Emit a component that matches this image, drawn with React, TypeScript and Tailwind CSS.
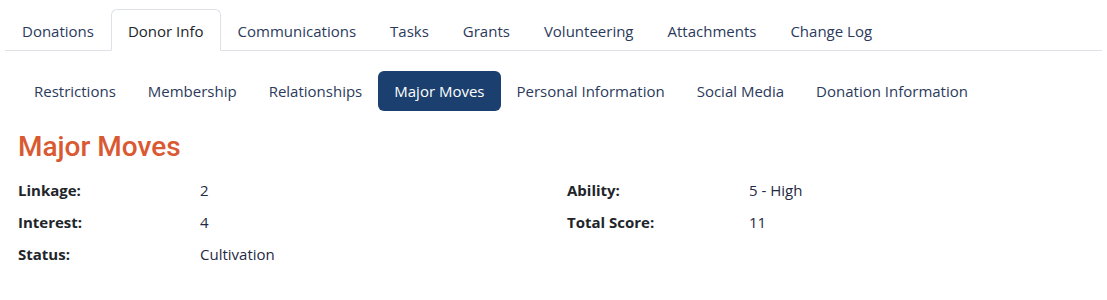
import React from "react";

const tabs = ["Donations", "Donor Info", "Communications", "Tasks", "Grants", "Volunteering", "Attachments", "Change Log"];
const pills = ["Restrictions", "Membership", "Relationships", "Major Moves", "Personal Information", "Social Media", "Donation Information"];

function Field({ label, value }: { label: string; value: string }) {
  return (
    <div className="flex h-[32px] items-center">
      <div className="w-[182px] shrink-0 font-bold text-[#212529]">{label}</div>
      <div className="text-[#1f2a44]">{value}</div>
    </div>
  );
}

export default function App() {
  return (
    <div className="bg-white w-[1107px] h-[300px] px-[5px] pt-[9px] text-[15px]" style={{ fontFamily: '"Open Sans", "Noto Sans", sans-serif' }}>
      <ul className="flex border-b border-[#dee2e6]">
        {tabs.map((t) => {
          const active = t === "Donor Info";
          return (
            <li
              key={t}
              className={
                active
                  ? "-mb-px h-[42px] px-[16px] pt-[3px] flex items-center border border-[#dee2e6] border-b-white rounded-t-[6px] bg-white text-[#212529]"
                  : "-mb-px h-[42px] px-[16px] pt-[3px] flex items-center border border-transparent text-[#2b3a5c]"
              }
            >
              {t}
            </li>
          );
        })}
      </ul>
      <div className="flex mt-[20px] pl-[13px]">
        {pills.map((p) => {
          const active = p === "Major Moves";
          return (
            <div
              key={p}
              className={
                active
                  ? "h-[40px] px-[16px] flex items-center rounded-[6px] bg-[#1b3f6e] text-white"
                  : "h-[40px] px-[16px] flex items-center text-[#2b3a5c]"
              }
            >
              {p}
            </div>
          );
        })}
      </div>
      <h2
        className="mt-[19px] pl-[13px] text-[28px] leading-[34px] font-medium text-[#d95a32]"
        style={{ fontFamily: 'Roboto, "Open Sans", sans-serif' }}
      >
        Major Moves
      </h2>
      <div className="mt-[10px] ml-[13px] grid grid-cols-2 w-[1098px]">
        <div>
          <Field label="Linkage:" value="2" />
          <Field label="Interest:" value="4" />
          <Field label="Status:" value="Cultivation" />
        </div>
        <div>
          <Field label="Ability:" value="5 - High" />
          <Field label="Total Score:" value="11" />
        </div>
      </div>
    </div>
  );
}
